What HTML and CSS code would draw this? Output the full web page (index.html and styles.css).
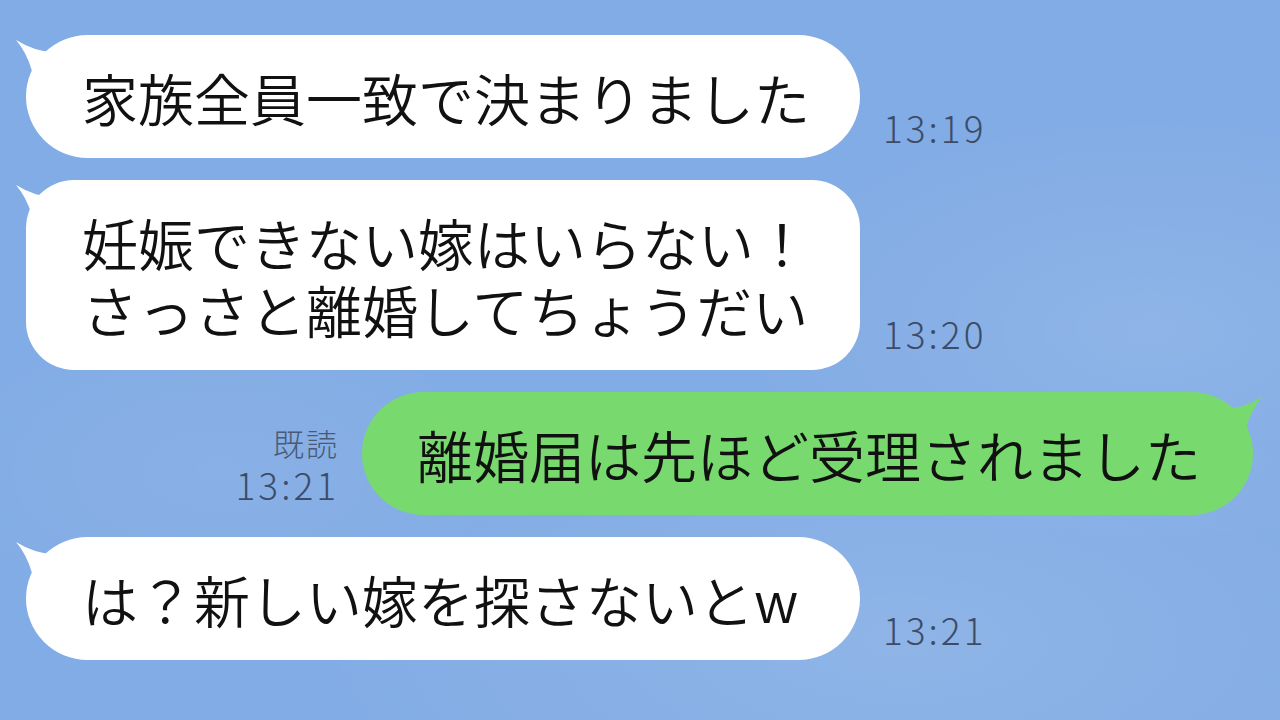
FILE: index.html
```html
<!DOCTYPE html>
<html lang="ja">
<head>
    <meta charset="UTF-8">
    <title>トーク</title>
    <link rel="stylesheet" href="styles.css">
</head>
<body>
    <main class="chat">
        <div class="row">
            <div class="bubble in">
                <svg class="tail tail-left" viewBox="0 0 50 50" width="50" height="50"><path d="M2 5 Q20 16 38 17 L44 44 L18 44 L18 36 Q13 18 2 5 Z"/></svg>
                家族全員一致で決まりました
            </div>
            <div class="meta">13:19</div>
        </div>

        <div class="row">
            <div class="bubble in multi">
                <svg class="tail tail-left" viewBox="0 0 50 50" width="50" height="50"><path d="M2 5 Q20 16 38 17 L44 44 L18 44 L18 36 Q13 18 2 5 Z"/></svg>
                <div class="line">妊娠できない嫁はいらない！</div>
                <div class="line">さっさと離婚してちょうだい</div>
            </div>
            <div class="meta meta-low">13:20</div>
        </div>

        <div class="row out">
            <div class="meta">
                <span class="read">既読</span>
                <span>13:21</span>
            </div>
            <div class="bubble outgoing">
                <svg class="tail tail-right" viewBox="0 0 50 50" width="50" height="50"><path d="M48 5 Q30 16 12 17 L6 44 L32 44 L32 36 Q37 18 48 5 Z"/></svg>
                離婚届は先ほど受理されました
            </div>
        </div>

        <div class="row">
            <div class="bubble in">
                <svg class="tail tail-left" viewBox="0 0 50 50" width="50" height="50"><path d="M2 5 Q20 16 38 17 L44 44 L18 44 L18 36 Q13 18 2 5 Z"/></svg>
                は？新しい嫁を探さないとw
            </div>
            <div class="meta">13:21</div>
        </div>
    </main>
</body>
</html>
```

FILE: styles.css
```css
body {
    margin: 0;
    width: 1280px;
    height: 720px;
    overflow: hidden;
    font-family: 'Noto Sans CJK JP', 'Noto Sans', sans-serif;
    background-color: #82ace5;
    background-image:
        radial-gradient(ellipse 420px 220px at 1150px 330px, rgba(255, 255, 255, 0.10), transparent),
        radial-gradient(ellipse 600px 260px at 900px 640px, rgba(255, 255, 255, 0.10), transparent),
        radial-gradient(ellipse 300px 160px at 220px 470px, rgba(255, 255, 255, 0.06), transparent);
}

.chat {
    display: flex;
    flex-direction: column;
    gap: 22px;
    padding: 35px 27px 0 26px;
}

.row {
    display: flex;
    align-items: flex-end;
    gap: 23px;
}

.row.out {
    justify-content: flex-end;
}

.bubble {
    position: relative;
    background-color: #ffffff;
    color: #111111;
    font-size: 56px;
    font-weight: 350;
    line-height: 67px;
    border-radius: 62px;
    padding: 28px 50px 28px 56px;
    white-space: nowrap;
}

.bubble.in {
    width: 834px;
    box-sizing: border-box;
}

.bubble.multi {
    border-radius: 48px;
}

.line {
    height: 67px;
}

.bubble.outgoing {
    background-color: #78da6e;
    padding: 28px 52px 28px 55px;
}

.tail {
    position: absolute;
    top: 0;
}

.tail-left {
    left: -12px;
    fill: #ffffff;
}

.tail-right {
    right: -11px;
    fill: #78da6e;
}

.meta {
    display: flex;
    flex-direction: column;
    align-items: flex-end;
    font-family: 'Noto Sans CJK JP', 'Noto Sans', sans-serif;
    font-weight: 300;
    font-size: 37px;
    line-height: 42px;
    letter-spacing: 3px;
    color: #3d4c66;
    margin-bottom: 10px;
}

.meta-low {
    margin-bottom: 16px;
}

.read {
    font-size: 31px;
    line-height: 40px;
    letter-spacing: 2px;
    color: #4a5a75;
}
```
